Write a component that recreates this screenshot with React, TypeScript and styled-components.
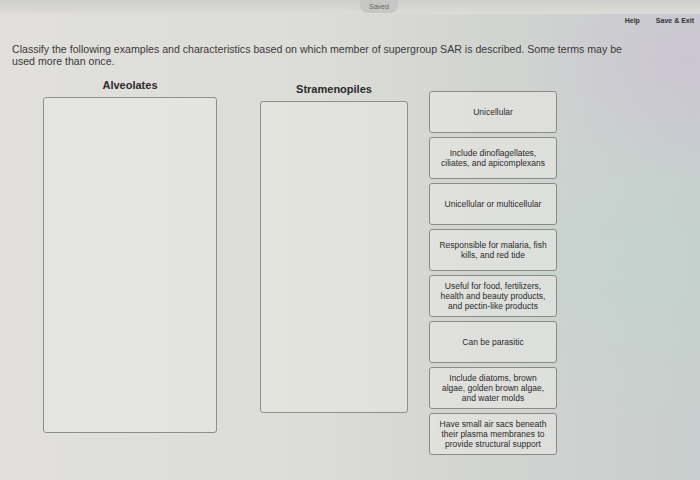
import React from 'react'
import styled, { createGlobalStyle } from 'styled-components'

const GlobalStyle = createGlobalStyle`
  html, body {
    margin: 0;
    padding: 0;
  }
  body {
    width: 700px;
    height: 480px;
    overflow: hidden;
    font-family: "Liberation Sans", Arial, sans-serif;
    color: #2e2e2e;
  }
`

const Page = styled.div`
  width: 700px;
  height: 480px;
  box-sizing: border-box;
  background:
    radial-gradient(ellipse 160px 120px at 690px 60px, rgba(205, 190, 215, 0.55), transparent),
    radial-gradient(ellipse 200px 160px at 640px 260px, rgba(190, 215, 205, 0.45), transparent),
    linear-gradient(90deg, #e1e0dc 0%, #dcdcd8 45%, #d2d4d1 70%, #c8cecd 100%);
  display: flex;
  flex-direction: column;
`

const TopStrip = styled.div`
  height: 14px;
  display: flex;
  justify-content: center;
  background: linear-gradient(180deg, #cfcfcd, #dddcd9);
`

const SavedPill = styled.div`
  margin-left: 58px;
  width: 38px;
  height: 13px;
  border-radius: 0 0 8px 8px;
  background: #c6c6c5;
  color: #666;
  font-size: 7px;
  display: flex;
  align-items: center;
  justify-content: center;
`

const HeaderLinks = styled.div`
  display: flex;
  justify-content: flex-end;
  gap: 16px;
  padding: 3px 6px 0 0;
  height: 12px;
  font-size: 7px;
  font-weight: bold;
  color: #333;
`

const Question = styled.p`
  margin: 14px 0 0 12px;
  width: 612px;
  font-size: 10.6px;
  line-height: 12px;
  color: #3a3a3a;
`

const Board = styled.div`
  display: flex;
  align-items: flex-start;
  padding-left: 43px;
  margin-top: 12px;
`

const Column = styled.div<{ $width: number; $shift: number; $gap: number }>`
  width: ${(p) => p.$width}px;
  margin-top: ${(p) => p.$shift}px;
  margin-right: ${(p) => p.$gap}px;
  display: flex;
  flex-direction: column;
  align-items: center;
`

const ColumnTitle = styled.div`
  font-size: 11px;
  font-weight: bold;
  color: #2b2b2b;
  height: 14px;
  margin-bottom: 4px;
`

const DropZone = styled.div<{ $height: number }>`
  width: 100%;
  height: ${(p) => p.$height}px;
  box-sizing: border-box;
  border: 1.5px solid #8e8e8c;
  border-radius: 3px;
  background: rgba(235, 234, 231, 0.45);
`

const CardList = styled.div`
  width: 128px;
  margin-top: 12px;
  display: flex;
  flex-direction: column;
  gap: 4px;
`

const Card = styled.div`
  height: 42px;
  box-sizing: border-box;
  border: 1.5px solid #8a8a88;
  border-radius: 3px;
  background: rgba(232, 232, 229, 0.6);
  display: flex;
  align-items: center;
  justify-content: center;
  text-align: center;
  padding: 0 8px;
  font-size: 8.5px;
  line-height: 10px;
  color: #2a2a2a;
`

const terms = [
  'Unicellular',
  'Include dinoflagellates, ciliates, and apicomplexans',
  'Unicellular or multicellular',
  'Responsible for malaria, fish kills, and red tide',
  'Useful for food, fertilizers, health and beauty products, and pectin-like products',
  'Can be parasitic',
  'Include diatoms, brown algae, golden brown algae, and water molds',
  'Have small air sacs beneath their plasma membranes to provide structural support',
]

export default function App() {
  return (
    <Page>
      <GlobalStyle />
      <TopStrip>
        <SavedPill>Saved</SavedPill>
      </TopStrip>
      <HeaderLinks>
        <span>Help</span>
        <span>Save &amp; Exit</span>
      </HeaderLinks>
      <Question>
        Classify the following examples and characteristics based on which member of supergroup SAR is described. Some terms may be used more than once.
      </Question>
      <Board>
        <Column $width={174} $shift={0} $gap={43}>
          <ColumnTitle>Alveolates</ColumnTitle>
          <DropZone $height={336} />
        </Column>
        <Column $width={148} $shift={4} $gap={21}>
          <ColumnTitle>Stramenopiles</ColumnTitle>
          <DropZone $height={312} />
        </Column>
        <CardList>
          {terms.map((t) => (
            <Card key={t}>{t}</Card>
          ))}
        </CardList>
      </Board>
    </Page>
  )
}
